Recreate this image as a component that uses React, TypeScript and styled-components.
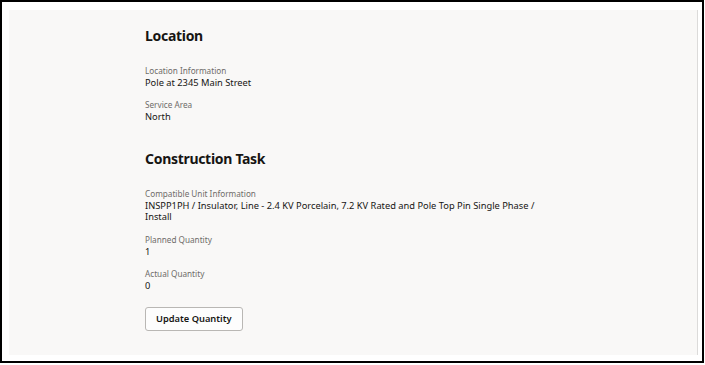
import styled, { createGlobalStyle } from 'styled-components';

const GlobalStyle = createGlobalStyle`
  html, body {
    margin: 0;
    padding: 0;
    background: #ffffff;
  }
  body {
    font-family: 'Noto Sans', 'Liberation Sans', sans-serif;
    color: #161513;
  }
`;

const Frame = styled.div`
  box-sizing: border-box;
  width: 704px;
  height: 363px;
  border: 2px solid #000;
  padding: 8px 4px 6px 7px;
  display: flex;
`;

const Panel = styled.main`
  flex: 1;
  background: #f9f8f7;
  border-right: 1px solid #dcdbda;
  padding: 16px 0 0 136px;
  display: flex;
  flex-direction: column;
`;

const Heading = styled.h2`
  margin: 0 0 17.5px;
  font-size: 14px;
  font-weight: 700;
  line-height: 20px;
  letter-spacing: -0.3px;
`;

const Field = styled.div`
  display: flex;
  flex-direction: column;
  max-width: 402px;
  margin-bottom: 10px;
`;

const Label = styled.span`
  font-size: 8.2px;
  line-height: 13px;
  color: #6f6c69;
`;

const Value = styled.span`
  font-size: 9.3px;
  line-height: 11.5px;
  color: #161513;
`;

const Section = styled.section`
  display: flex;
  flex-direction: column;
  margin-bottom: 16.5px;
`;

const Button = styled.button`
  align-self: flex-start;
  margin-top: 5px;
  height: 24px;
  padding: 0 10px;
  background: #fdfdfd;
  border: 1px solid #b9b7b4;
  border-radius: 3px;
  font-family: inherit;
  font-size: 9.3px;
  font-weight: 600;
  color: #161513;
`;

const fields = {
  location: [
    { label: 'Location Information', value: 'Pole at 2345 Main Street' },
    { label: 'Service Area', value: 'North' },
  ],
  task: [
    {
      label: 'Compatible Unit Information',
      value:
        'INSPP1PH / Insulator, Line - 2.4 KV Porcelain, 7.2 KV Rated and Pole Top Pin Single Phase / Install',
    },
    { label: 'Planned Quantity', value: '1' },
    { label: 'Actual Quantity', value: '0' },
  ],
};

const App = () => (
  <>
    <GlobalStyle />
    <Frame>
      <Panel>
        <Section>
          <Heading>Location</Heading>
          {fields.location.map((f) => (
            <Field key={f.label}>
              <Label>{f.label}</Label>
              <Value>{f.value}</Value>
            </Field>
          ))}
        </Section>
        <Section>
          <Heading>Construction Task</Heading>
          {fields.task.map((f) => (
            <Field key={f.label}>
              <Label>{f.label}</Label>
              <Value>{f.value}</Value>
            </Field>
          ))}
          <Button>Update Quantity</Button>
        </Section>
      </Panel>
    </Frame>
  </>
);

export default App;
